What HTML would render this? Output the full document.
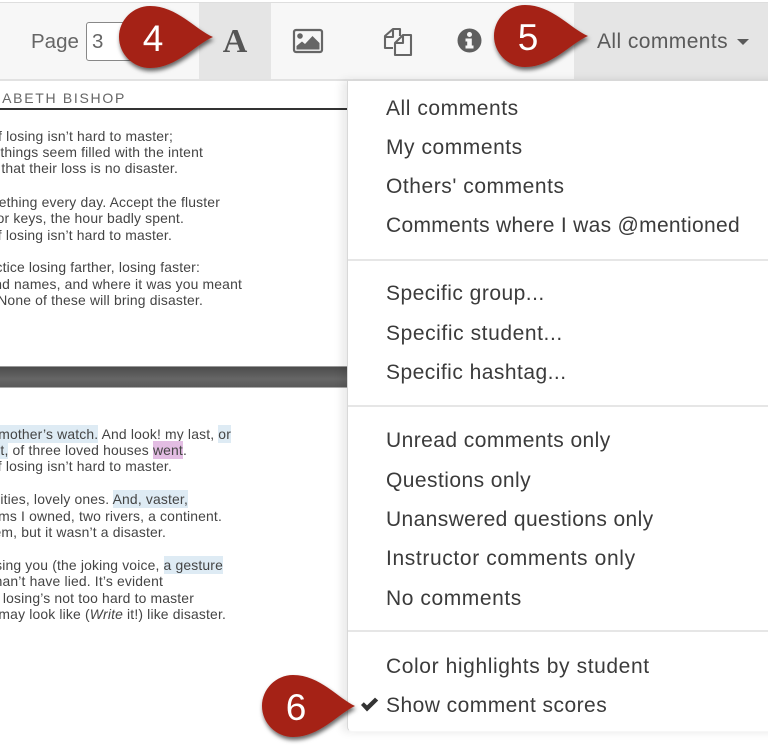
<!DOCTYPE html>
<html><head><meta charset="utf-8"><style>
html,body{margin:0;padding:0;width:768px;height:750px;overflow:hidden;background:#fff}
#w{position:absolute;left:0;top:0;width:768px;height:750px;overflow:hidden;font-family:"Liberation Sans",sans-serif;filter:blur(.35px)}
.a{position:absolute}
.p{position:absolute;white-space:nowrap;font-size:13.9px;letter-spacing:.17px;line-height:16px;color:#444;text-align:right}
.h{background:#deebf4;padding:1px 0}
.m{position:absolute;left:386px;white-space:nowrap;font-size:21px;line-height:26px;color:#3b3b3b;letter-spacing:.3px;margin-top:1px}
.s{position:absolute;left:348px;width:420px;height:2px;background:#e6e6e6}
</style></head><body><div id="w">
<div class="a" style="left:0;top:2px;width:768px;height:2px;background:#dedede"></div>
<div class="a" style="left:0;top:3px;width:768px;height:76px;background:#f7f7f7;border-bottom:2px solid #e2e2e2"></div>
<div class="a" style="left:199px;top:3px;width:72px;height:76px;background:#e5e5e5"></div>
<div class="a" style="left:574px;top:3px;width:194px;height:76px;background:#e5e5e5"></div>
<div class="a" style="left:31px;top:28px;font-size:20.5px;line-height:28px;color:#666">Page</div>
<div class="a" style="left:86px;top:22px;width:50px;height:37px;background:#fff;border:1px solid #888;border-radius:3px"></div>
<div class="a" style="left:92px;top:28px;font-size:20.5px;line-height:28px;color:#666">3</div>
<div class="a" style="left:218px;top:22px;width:34px;text-align:center;font:bold 34px/40px 'Liberation Serif',serif;color:#555">A</div>
<svg class="a" style="left:292px;top:28px" width="32" height="26" viewBox="0 0 32 26">
<rect x="2" y="2" width="28" height="22" rx="2" fill="none" stroke="#666" stroke-width="2.2"/>
<circle cx="8" cy="8" r="2.8" fill="#666"/>
<path d="M4.5 21.5V18L10 13.5L13 16L20.5 8L27.5 15V21.5Z" fill="#666"/></svg>
<svg class="a" style="left:382px;top:26px" width="32" height="31" viewBox="0 0 32 31" fill="none" stroke="#666" stroke-width="2.100" stroke-linejoin="round">
<path d="M11 22H3V10L11 3H18V10"/><path d="M4 11H11V4"/>
<path d="M13 29V17L21 9H29V29Z" fill="#f7f7f7"/><path d="M14 17H21V10"/></svg>
<svg class="a" style="left:457px;top:28px" width="25" height="25" viewBox="0 0 25 25">
<circle cx="12.500" cy="12.500" r="12" fill="#5f5f5f"/>
<circle cx="12.500" cy="6.500" r="2.500" fill="#f7f7f7"/>
<path d="M8.500 10.500H14.800V17.500H16.500V20.500H8.500V17.500H10.200V13.500H8.500Z" fill="#f7f7f7"/></svg>
<div class="a" style="left:597px;top:28px;font-size:21px;line-height:28px;color:#5a5a5a;letter-spacing:.42px;white-space:nowrap">All comments</div>
<svg class="a" style="left:736px;top:38px" width="14" height="8"><path d="M1 1H13L7 7Z" fill="#5a5a5a"/></svg>

<div class="a" style="right:642px;top:89px;font-size:14px;line-height:18px;color:#666;letter-spacing:1.7px;white-space:nowrap">ELIZABETH BISHOP</div>
<div class="a" style="left:0;top:108px;width:348px;height:2px;background:#333"></div>

<div class="p" style="right:595px;top:128px">The art of losing isn’t hard to master;</div>
<div class="p" style="right:565px;top:144px">so many things seem filled with the intent</div>
<div class="p" style="right:590px;top:160px">to be lost that their loss is no disaster.</div>
<div class="p" style="right:548px;top:194px">Lose something every day. Accept the fluster</div>
<div class="p" style="right:584px;top:210px">of lost door keys, the hour badly spent.</div>
<div class="p" style="right:596px;top:227px">The art of losing isn’t hard to master.</div>
<div class="p" style="right:568px;top:259px">Then practice losing farther, losing faster:</div>
<div class="p" style="right:526px;top:276px">places, and names, and where it was you meant</div>
<div class="p" style="right:565px;top:292px">to travel. None of these will bring disaster.</div>

<div class="a" style="left:0;top:366px;width:348px;height:22px;background:linear-gradient(#4c4c4c,#666 60%,#5a5a5a);border-top:1px solid #999;border-bottom:1px solid #aaa;box-sizing:border-box"></div>

<div class="p" style="right:537px;top:426px">I lost my <span class="h">mother’s watch.</span> And look! my last, <span class="h">or</span></div>
<div class="p" style="right:581px;top:442px"><span class="h">next-to-last,</span> of three loved houses <span style="background:#e3bde3;padding:1px 0">went</span>.</div>
<div class="p" style="right:596px;top:458px">The art of losing isn’t hard to master.</div>
<div class="p" style="right:580px;top:491px">I lost two cities, lovely ones. <span class="h">And, vaster,</span></div>
<div class="p" style="right:546px;top:508px">some realms I owned, two rivers, a continent.</div>
<div class="p" style="right:602px;top:524px">I miss them, but it wasn’t a disaster.</div>
<div class="p" style="right:545px;top:557px">—Even losing you (the joking voice, <span class="h">a gesture</span></div>
<div class="p" style="right:605px;top:573px">I love) I shan’t have lied. It’s evident</div>
<div class="p" style="right:574px;top:590px">the art of losing’s not too hard to master</div>
<div class="p" style="right:542px;top:606px">though it may look like (<i>Write</i> it!) like disaster.</div>

<div class="a" style="left:347px;top:80px;width:440px;height:652px;background:#fff;border:1px solid #d8d8d8;border-bottom-color:#f7f7f7;border-radius:0 0 0 5px;box-sizing:border-box;box-shadow:-5px 0 9px rgba(0,0,0,.09)"></div>
<div class="m" style="top:95px;letter-spacing:.55px">All comments</div>
<div class="m" style="top:134px;letter-spacing:.55px">My comments</div>
<div class="m" style="top:173px;letter-spacing:.55px">Others' comments</div>
<div class="m" style="top:212px">Comments where I was @mentioned</div>
<div class="s" style="top:259px"></div>
<div class="m" style="top:280px;letter-spacing:.48px">Specific group...</div>
<div class="m" style="top:320px;letter-spacing:.58px">Specific student...</div>
<div class="m" style="top:359px;letter-spacing:.47px">Specific hashtag...</div>
<div class="s" style="top:405px"></div>
<div class="m" style="top:427px;letter-spacing:.44px">Unread comments only</div>
<div class="m" style="top:467px;letter-spacing:.44px">Questions only</div>
<div class="m" style="top:506px;letter-spacing:.38px">Unanswered questions only</div>
<div class="m" style="top:545px;letter-spacing:.63px">Instructor comments only</div>
<div class="m" style="top:585px;letter-spacing:.57px">No comments</div>
<div class="s" style="top:630px"></div>
<div class="m" style="top:653px;letter-spacing:.6px">Color highlights by student</div>
<div class="m" style="top:692px;letter-spacing:.46px">Show comment scores</div>
<svg class="a" style="left:360px;top:697px" width="19" height="15" viewBox="0 0 19 15"><path d="M1 8L3.800 5.200L7 8.400L15 .6L18.200 3.500L7 14.500Z" fill="#333"/></svg>

<svg class="a" style="left:0;top:0" width="768" height="750">
<defs><filter id="d" x="-20%" y="-20%" width="140%" height="150%"><feDropShadow dx="1" dy="3" stdDeviation="2.200" flood-color="#000" flood-opacity=".6"/></filter></defs>
<g fill="#a52014" filter="url(#d)">
<path transform="translate(150,37)" d="M63 0C46 -7 27 -31 0 -31C-17 -31 -31 -17 -31 0C-31 17 -17 31 0 31C27 31 46 7 63 0Z"/>
<path transform="translate(525,36)" d="M63 0C46 -7 27 -31 0 -31C-17 -31 -31 -17 -31 0C-31 17 -17 31 0 31C27 31 46 7 63 0Z"/>
<path transform="translate(293,706)" d="M62 0C46 -7 27 -31 0 -31C-17 -31 -31 -17 -31 0C-31 17 -17 31 0 31C27 31 46 7 62 0Z"/>
</g>
<g fill="#fff" font-family="Liberation Sans, sans-serif" font-size="37" text-anchor="middle">
<text x="153" y="51">4</text><text x="528" y="50">5</text><text x="296" y="720">6</text>
</g></svg>
</div></body></html>
